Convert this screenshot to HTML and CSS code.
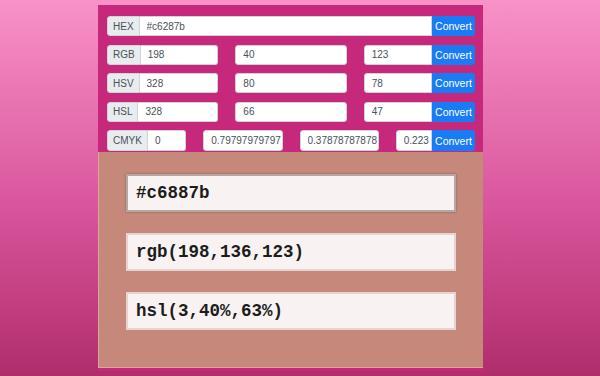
FILE: index.html
```html
<!DOCTYPE html>
<html lang="en">
<head>
    <meta charset="UTF-8">
    <title>Color Converter</title>
    <link rel="stylesheet" href="styles.css">
</head>
<body>
    <div class="converter">
        <form class="inputs">
            <div class="row row-1">
                <div class="cell">
                    <span class="label">HEX</span>
                    <input type="text" class="field" value="#c6287b">
                    <button type="button" class="convert">Convert</button>
                </div>
            </div>

            <div class="row row-3">
                <div class="cell">
                    <span class="label">RGB</span>
                    <input type="text" class="field" value="198">
                </div>
                <div class="cell">
                    <input type="text" class="field round" value="40">
                </div>
                <div class="cell">
                    <input type="text" class="field" value="123">
                    <button type="button" class="convert">Convert</button>
                </div>
            </div>

            <div class="row row-3">
                <div class="cell">
                    <span class="label">HSV</span>
                    <input type="text" class="field" value="328">
                </div>
                <div class="cell">
                    <input type="text" class="field round" value="80">
                </div>
                <div class="cell">
                    <input type="text" class="field" value="78">
                    <button type="button" class="convert">Convert</button>
                </div>
            </div>

            <div class="row row-3">
                <div class="cell">
                    <span class="label">HSL</span>
                    <input type="text" class="field" value="328">
                </div>
                <div class="cell">
                    <input type="text" class="field round" value="66">
                </div>
                <div class="cell">
                    <input type="text" class="field" value="47">
                    <button type="button" class="convert">Convert</button>
                </div>
            </div>

            <div class="row row-4">
                <div class="cell">
                    <span class="label">CMYK</span>
                    <input type="text" class="field" value="0">
                </div>
                <div class="cell">
                    <input type="text" class="field round" value="0.7979797979797979">
                </div>
                <div class="cell">
                    <input type="text" class="field round" value="0.3787878787878788">
                </div>
                <div class="cell">
                    <input type="text" class="field" value="0.223">
                    <button type="button" class="convert">Convert</button>
                </div>
            </div>
        </form>

        <div class="results">
            <div class="result active">#c6887b</div>
            <div class="result">rgb(198,136,123)</div>
            <div class="result">hsl(3,40%,63%)</div>
        </div>
    </div>
</body>
</html>
```

FILE: styles.css
```css
body {
    margin: 0;
    min-height: 376px;
    font-family: "Liberation Sans", Arial, sans-serif;
    background: linear-gradient(180deg, #f892c8 0%, #d9559c 55%, #b02d6c 100%);
}

.converter {
    width: 385px;
    margin: 5px 0 0 98px;
    padding-bottom: 3px;
    background: #c6287b;
}

.inputs {
    display: flex;
    flex-direction: column;
    gap: 8.5px;
    padding: 11px 8px 1px 9px;
}

.row {
    display: grid;
    column-gap: 17px;
    height: 20px;
}

.row-1 {
    grid-template-columns: 1fr;
}

.row-3 {
    grid-template-columns: repeat(3, 1fr);
}

.row-4 {
    grid-template-columns: repeat(4, 1fr);
    height: 21px;
}

.cell {
    display: flex;
    min-width: 0;
}

.label {
    display: flex;
    align-items: center;
    padding: 0 5px;
    background: #e9ecef;
    border: 1px solid #ced4da;
    border-radius: 3px 0 0 3px;
    color: #495057;
    font-size: 10px;
}

.field {
    flex: 1;
    min-width: 0;
    margin: 0;
    padding: 0 1px 0 7px;
    border: 1px solid #ced4da;
    border-left: none;
    border-radius: 0 3px 3px 0;
    background: #fff;
    color: #495057;
    font-family: inherit;
    font-size: 10px;
}

.cell:last-child .field {
    border-left: 1px solid #ced4da;
    border-radius: 3px 0 0 3px;
}

.row-1 .cell .field {
    border-left: none;
    border-radius: 0;
}

.field.round,
.cell:last-child .field.round {
    border-left: 1px solid #ced4da;
    border-radius: 3px;
}

.convert {
    width: 43px;
    margin: 0;
    padding: 0;
    border: none;
    border-radius: 0 3px 3px 0;
    background: #1a7cf5;
    color: #fff;
    font-family: inherit;
    font-size: 10.5px;
    cursor: pointer;
}

.results {
    display: flex;
    flex-direction: column;
    gap: 21px;
    height: 216px;
    box-sizing: border-box;
    padding: 22px 27px 0 27px;
    background: #c6887b;
    border-left: 1px solid #d9a89c;
    border-bottom: 1px solid #d9a89c;
}

.result {
    height: 38px;
    box-sizing: border-box;
    display: flex;
    align-items: center;
    padding: 0 8px;
    background: #f8f3f2;
    border: 2px solid #e6d2ce;
    color: #1c1c1c;
    font-family: "Liberation Mono", "Courier New", monospace;
    font-weight: bold;
    font-size: 17.5px;
}

.result.active {
    border-color: #b7a7a4;
    box-shadow: 0 0 2px rgba(0, 0, 0, 0.35);
}
```
